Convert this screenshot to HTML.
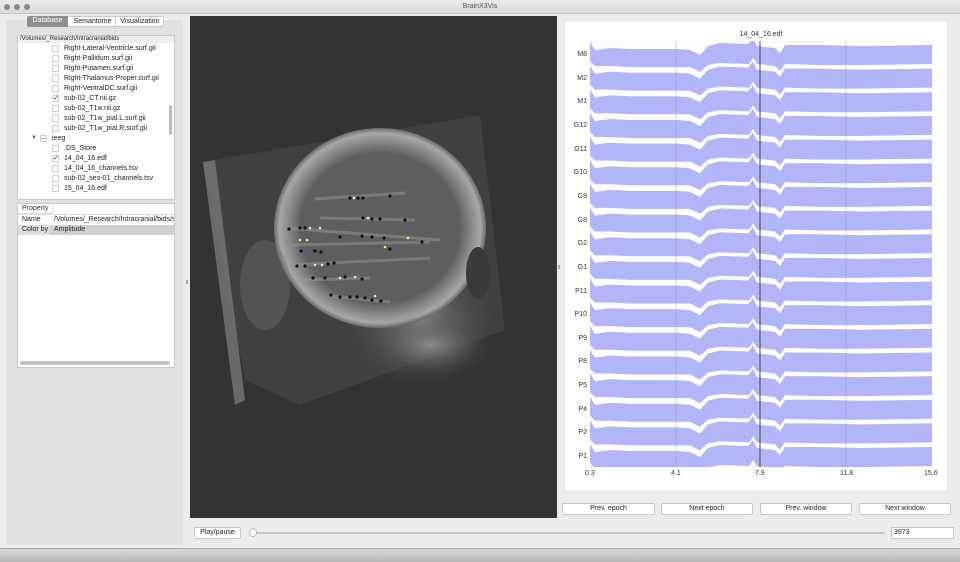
<!DOCTYPE html>
<html><head><meta charset="utf-8"><style>
*{margin:0;padding:0;box-sizing:border-box}
body{width:960px;height:562px;overflow:hidden;background:#ececec;font-family:"Liberation Sans",sans-serif;position:relative}
.a{position:absolute}
.t{font-size:7px;color:#222;white-space:nowrap}
.cb{position:absolute;width:7px;height:7px;border:1px solid #ccc;background:#fff;border-radius:1px;font-size:7px;line-height:5px;text-align:center;color:#333}
.btn{position:absolute;height:12px;background:#fff;border:1px solid #c8c8c8;border-radius:2px;font-size:7px;text-align:center;line-height:10px;color:#222}
.lab{position:absolute;font-size:7px;color:#333;text-align:right;width:20px}
</style></head><body>
<div class="a" style="left:0;top:0;width:960px;height:14px;background:linear-gradient(#ececec,#d9d9d9);border-bottom:1px solid #c4c4c4"></div>
<div class="a" style="left:4px;top:4px;width:6px;height:6px;border-radius:50%;background:#8a8a8a"></div>
<div class="a" style="left:14px;top:4px;width:6px;height:6px;border-radius:50%;background:#8a8a8a"></div>
<div class="a" style="left:24px;top:4px;width:6px;height:6px;border-radius:50%;background:#8a8a8a"></div>
<div class="a t" style="left:0;width:960px;top:3px;text-align:center;color:#555">BrainX3Vis</div>

<div class="a" style="left:6px;top:20px;width:177px;height:525px;background:#e2e2e2;border-radius:3px"></div>
<div class="a" style="left:27px;top:16px;width:137px;height:11px;background:#fff;border:1px solid #c8c8c8;border-radius:2px"></div>
<div class="a t" style="left:27px;top:16px;width:41px;height:11px;background:#8f8f8f;color:#fff;text-align:center;line-height:10px;border-radius:2px 0 0 2px">Database</div>
<div class="a t" style="left:70px;top:16px;width:45px;text-align:center;line-height:11px">Semantome</div>
<div class="a" style="left:115px;top:17px;width:1px;height:9px;background:#ccc"></div>
<div class="a t" style="left:116px;top:16px;width:48px;text-align:center;line-height:11px">Visualization</div>

<div class="a" style="left:17px;top:35px;width:158px;height:165px;background:#fff;border:1px solid #c8c8c8"></div>
<div class="a t" style="left:18px;top:36px;width:156px;height:7px;background:#eee;font-size:6px;line-height:7px;padding-left:2px">/Volumes/_Research/Intracranial/bids</div>
<div class="a" style="left:169px;top:105px;width:3px;height:30px;background:#bbb;border-radius:2px"></div>
<div id="tree"></div>

<div class="a" style="left:17px;top:203px;width:158px;height:165px;background:#fff;border:1px solid #c8c8c8"></div>
<div class="a t" style="left:18px;top:204px;width:35px;height:10px;border-right:1px solid #ddd;border-bottom:1px solid #ddd;line-height:10px;padding-left:4px;color:#333">Property</div>
<div class="a" style="left:18px;top:214px;width:156px;height:1px;background:#ddd"></div>
<div class="a t" style="left:22px;top:215px;line-height:10px">Name</div>
<div class="a t" style="left:54px;top:215px;width:120px;overflow:hidden;line-height:10px">/Volumes/_Research/Intracranial/bids/sub</div>
<div class="a" style="left:18px;top:225px;width:156px;height:10px;background:#ddd"></div>
<div class="a t" style="left:22px;top:225px;line-height:10px">Color by</div>
<div class="a" style="left:50px;top:225px;width:124px;height:10px;background:#d0d0d0"></div>
<div class="a t" style="left:54px;top:225px;line-height:10px">Amplitude</div>
<div class="a" style="left:20px;top:361px;width:150px;height:4px;background:#c4c4c4;border-radius:2px"></div>

<div class="a" style="left:190px;top:16px;width:367px;height:502px;background:#333"></div>
<svg class="a" style="left:190px;top:16px" width="367" height="502" viewBox="190 16 367 502">
<defs>
<radialGradient id="sk" cx="0.5" cy="0.5" r="0.5"><stop offset="0.75" stop-color="#5e5e5e"/><stop offset="0.95" stop-color="#a8a8a8"/><stop offset="1" stop-color="#6a6a6a"/></radialGradient>
<radialGradient id="fc" cx="0.5" cy="0.5" r="0.5"><stop offset="0" stop-color="#8a8a8a"/><stop offset="1" stop-color="#444" stop-opacity="0"/></radialGradient>
</defs>
<polygon points="203,162 480,115 505,330 300,405 245,380" fill="#4a4a4a" opacity="0.6"/>
<polygon points="203,162 215,160 245,400 235,405" fill="#777" opacity="0.8"/>
<ellipse cx="420" cy="320" rx="80" ry="70" fill="url(#fc)"/>
<ellipse cx="380" cy="228" rx="106" ry="100" fill="url(#sk)"/>
<ellipse cx="478" cy="273" rx="12" ry="26" fill="#3a3a3a"/>
<ellipse cx="430" cy="345" rx="60" ry="32" fill="url(#fc)"/>
<ellipse cx="265" cy="285" rx="25" ry="45" fill="#777" opacity="0.35"/>
<g stroke="#999" stroke-width="3" opacity="0.5">
<line x1="315" y1="199" x2="405" y2="193"/><line x1="320" y1="218" x2="415" y2="220"/><line x1="285" y1="228" x2="440" y2="240"/><line x1="290" y1="245" x2="430" y2="242"/><line x1="290" y1="265" x2="430" y2="258"/><line x1="300" y1="280" x2="370" y2="278"/><line x1="330" y1="296" x2="390" y2="302"/></g>
<g fill="#111">
<circle cx="350" cy="198" r="1.6"/><circle cx="358" cy="198" r="1.6"/><circle cx="363" cy="198" r="1.6"/><circle cx="390" cy="196" r="1.6"/>
<circle cx="363" cy="218" r="1.6"/><circle cx="372" cy="219" r="1.6"/><circle cx="380" cy="219" r="1.6"/><circle cx="405" cy="220" r="1.6"/>
<circle cx="289" cy="229" r="1.6"/><circle cx="300" cy="228" r="1.6"/><circle cx="305" cy="228" r="1.6"/><circle cx="340" cy="237" r="1.6"/><circle cx="362" cy="236" r="1.6"/><circle cx="372" cy="237" r="1.6"/><circle cx="384" cy="238" r="1.6"/>
<circle cx="301" cy="251" r="1.6"/><circle cx="315" cy="251" r="1.6"/><circle cx="321" cy="252" r="1.6"/><circle cx="390" cy="249" r="1.6"/><circle cx="422" cy="242" r="1.6"/>
<circle cx="297" cy="266" r="1.6"/><circle cx="305" cy="266" r="1.6"/><circle cx="328" cy="264" r="1.6"/><circle cx="334" cy="263" r="1.6"/>
<circle cx="313" cy="278" r="1.6"/><circle cx="325" cy="278" r="1.6"/><circle cx="345" cy="277" r="1.6"/><circle cx="362" cy="279" r="1.6"/>
<circle cx="331" cy="295" r="1.6"/><circle cx="340" cy="297" r="1.6"/><circle cx="350" cy="297" r="1.6"/><circle cx="357" cy="297" r="1.6"/><circle cx="365" cy="298" r="1.6"/><circle cx="372" cy="300" r="1.6"/><circle cx="381" cy="301" r="1.6"/></g>
<g fill="#eeee88">
<circle cx="354" cy="198" r="1.3"/><circle cx="368" cy="218" r="1.3"/><circle cx="310" cy="228" r="1.3"/><circle cx="320" cy="228" r="1.3"/><circle cx="300" cy="240" r="1.3"/><circle cx="307" cy="240" r="1.3"/><circle cx="385" cy="247" r="1.3"/><circle cx="408" cy="238" r="1.3"/><circle cx="315" cy="265" r="1.3"/><circle cx="322" cy="265" r="1.3"/><circle cx="340" cy="278" r="1.3"/><circle cx="355" cy="277" r="1.3"/><circle cx="375" cy="296" r="1.3"/></g>
</svg>
<div class="a" style="left:558px;top:265px;width:2px;height:4px;background:#aaa"></div>
<div class="a" style="left:186px;top:280px;width:2px;height:4px;background:#aaa"></div>

<div class="a" style="left:565px;top:22px;width:382px;height:468px;background:#fff;border-radius:3px"></div>
<div class="a t" style="left:590px;width:342px;top:31px;text-align:center;color:#333">14_04_16.edf</div>
<svg class="a" style="left:590px;top:41px" width="342" height="426" viewBox="0 0 342 426">
<defs><path id="b" d="M0,-2 L3,3 L5,6 L20,4 L40,5 L87,5 L100,6 L110,11 L118,2 L130,-1 L158,0 L163,-6 L167,2 L185,4 L190,9 L195,1 L230,1 L270,2 L342,1 L342,20 L270,21 L230,21 L195,20 L190,27 L185,22 L167,20 L163,14 L159,20 L130,19 L118,21 L110,28 L100,23 L87,23 L40,23 L20,22 L5,22 L0,17 Z" fill="#b4b4f8"/></defs>
<rect x="0" y="0" width="342" height="426" fill="#fff" stroke="#eee"/>
<g id="bands"></g>
<line x1="86" y1="0" x2="86" y2="426" stroke="#9a9ad0" stroke-width="0.5"/>
<line x1="256" y1="0" x2="256" y2="426" stroke="#9a9ad0" stroke-width="0.5"/>
<line x1="170" y1="0" x2="170" y2="426" stroke="#444" stroke-width="1"/>
</svg>
<div id="labs"></div>
<div class="a t" style="left:585px;top:470px;color:#333">0.3</div>
<div class="a t" style="left:671px;top:470px;color:#333">4.1</div>
<div class="a t" style="left:755px;top:470px;color:#333">7.9</div>
<div class="a t" style="left:840px;top:470px;color:#333">11.8</div>
<div class="a t" style="left:924px;top:470px;color:#333">15.6</div>

<div class="btn" style="left:562px;top:503px;width:93px">Prev. epoch</div>
<div class="btn" style="left:661px;top:503px;width:92px">Next epoch</div>
<div class="btn" style="left:760px;top:503px;width:92px">Prev. window</div>
<div class="btn" style="left:859px;top:503px;width:92px">Next window</div>
<div class="btn" style="left:194px;top:527px;width:47px">Play/pause</div>
<div class="a" style="left:252px;top:532px;width:633px;height:2px;background:#c8c8c8;border-radius:1px"></div>
<div class="a" style="left:249px;top:528px;width:8px;height:9px;background:#fff;border:1px solid #bbb;border-radius:50%"></div>
<div class="a t" style="left:891px;top:527px;width:63px;height:12px;background:#fff;border:1px solid #c8c8c8;line-height:10px;padding-left:2px">3973</div>
<div class="a" style="left:0;top:548px;width:960px;height:14px;background:linear-gradient(#d8d8d8,#b8b8b8);border-top:1px solid #aaa"></div>

<script>
var rows=[[52,"Right-Lateral-Ventricle.surf.gii"],[52,"Right-Pallidum.surf.gii"],[52,"Right-Putamen.surf.gii"],[52,"Right-Thalamus-Proper.surf.gii"],[52,"Right-VentralDC.surf.gii"],[52,"sub-02_CT.nii.gz",1],[52,"sub-02_T1w.nii.gz"],[52,"sub-02_T1w_pial.L.surf.gii"],[52,"sub-02_T1w_pial.R.surf.gii"],[40,"ieeg",2],[52,".DS_Store"],[52,"14_04_16.edf",1],[52,"14_04_16_channels.tsv"],[52,"sub-02_ses-01_channels.tsv"],[52,"15_04_16.edf"],[52,"15_04_16_channels.tsv"]];
var h="";rows.forEach(function(r,i){var y=44+i*10;if(y>193)return;
if(r[2]==2){h+='<div class="a t" style="left:31px;top:'+(y+1)+'px;font-size:6px;color:#666">▼</div>';}
h+='<div class="cb" style="left:'+r[0]+'px;top:'+(y+1)+'px">'+(r[2]==1?'✓':r[2]==2?'–':'')+'</div>';
h+='<div class="a t" style="left:'+(r[0]+12)+'px;top:'+y+'px;line-height:9px;'+(y>186?'height:'+(200-y)+'px;overflow:hidden':'')+'">'+r[1]+'</div>';});
document.getElementById('tree').innerHTML=h;
var L=["M8","M2","M1","G12","G11","G10","G9","G8","G2","G1","P11","P10","P9","P8","P5","P4","P2","P1"];
var b="",l="";L.forEach(function(n,i){var y=54+i*23.65;b+='<use href="#b" transform="translate(0,'+(y-41-10)+')"/>';
l+='<div class="lab" style="left:567px;top:'+(y-3)+'px">'+n+'</div>';});
document.getElementById('bands').innerHTML=b;document.getElementById('labs').innerHTML=l;
</script>
</body></html>
